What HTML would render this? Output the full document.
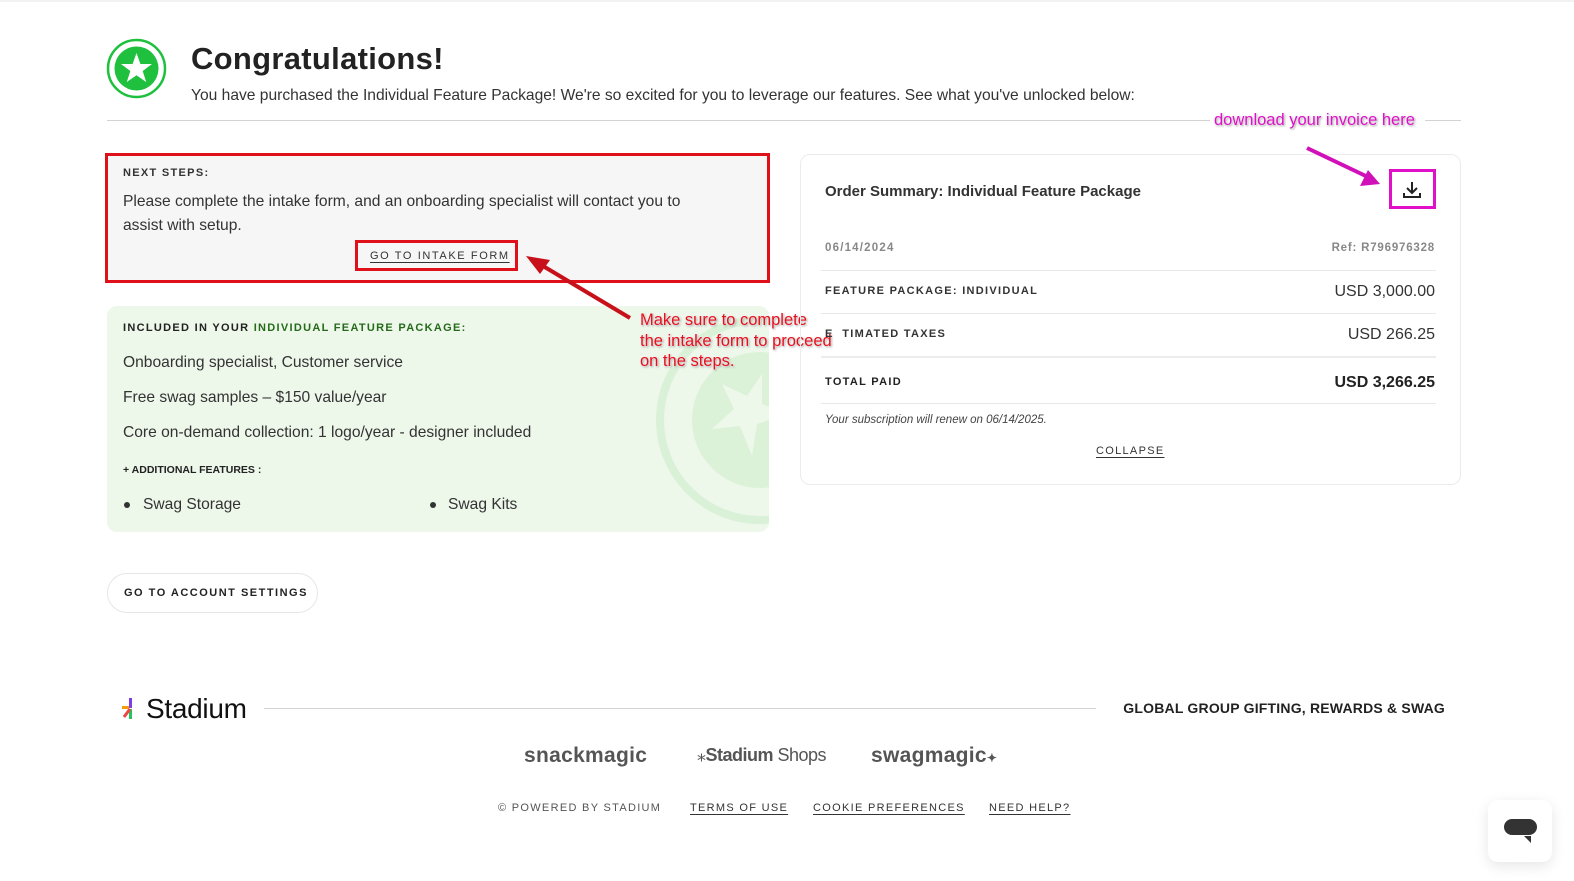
<!DOCTYPE html>
<html><head><meta charset="utf-8"><style>
*{margin:0;padding:0;box-sizing:border-box}
body{width:1574px;height:881px;background:#fff;font-family:"Liberation Sans",sans-serif;color:#222;position:relative;overflow:hidden}
.a{position:absolute;white-space:nowrap}
.cap{text-transform:uppercase;letter-spacing:1.3px;font-weight:bold}
.ann{font-family:"Liberation Sans",sans-serif;text-shadow:0 0 2px #fff,1px 1px 2px #888,0 0 3px #fff}
u{text-underline-offset:3px}
</style></head><body>
<div class="a" style="left:0;top:0;width:1574px;height:2px;background:#f2f2f2"></div>
<svg class="a" style="left:106px;top:38px" width="61" height="61" viewBox="0 0 61 61">
<circle cx="30.5" cy="30.5" r="28.5" fill="none" stroke="#1fc03e" stroke-width="2.5"/>
<circle cx="30.5" cy="30.5" r="22" fill="#1fc03e"/>
<polygon points="30.5,15 34.4,26 46,26 36.7,33 40.2,44 30.5,37.3 20.8,44 24.3,33 15,26 26.6,26" fill="#fff"/>
</svg>
<div class="a" style="left:191px;top:41px;font-size:31px;font-weight:bold;color:#222;letter-spacing:0.3px">Congratulations!</div>
<div class="a" style="left:191px;top:87px;font-size:15.6px;color:#333">You have purchased the Individual Feature Package! We're so excited for you to leverage our features. See what you've unlocked below:</div>
<div class="a" style="left:107px;top:120px;width:1354px;height:1px;background:#d3d3d3"></div>

<!-- next steps -->
<div class="a" style="left:107px;top:155px;width:661px;height:126px;background:#f6f6f6"></div>
<div class="a" style="left:105px;top:153px;width:665px;height:130px;border:3px solid #e0101a"></div>
<div class="a cap" style="left:123px;top:167px;font-size:11px;color:#333">Next steps:</div>
<div class="a" style="left:123px;top:190px;font-size:15.6px;line-height:24px;color:#333;white-space:normal;width:600px">Please complete the intake form, and an onboarding specialist will contact you to assist with setup.</div>
<div class="a" style="left:355px;top:240px;width:163px;height:31px;border:3px solid #e0101a"></div>
<div class="a cap" style="left:370px;top:250px;font-size:11px;color:#333;font-weight:normal;letter-spacing:1.6px"><u>Go to intake form</u></div>

<!-- green box -->
<div class="a" style="left:107px;top:306px;width:662px;height:226px;background:#edf7ea;border-radius:10px;overflow:hidden">
<svg style="position:absolute;left:540px;top:0px" width="130" height="226"><circle cx="113" cy="114" r="100" fill="none" stroke="#d9f1d6" stroke-width="8"/><circle cx="113" cy="114" r="68" fill="#dcf2d8"/><polygon points="75,78 100,90 115,68 115,98 140,108 110,118 105,150 93,120 65,123 87,103" fill="#edf7ea"/></svg>
</div>
<div class="a cap" style="left:123px;top:322px;font-size:11px;color:#222">Included in your <span style="color:#256b1a">Individual Feature Package:</span></div>
<div class="a" style="left:123px;top:354px;font-size:15.6px;color:#333">Onboarding specialist, Customer service</div>
<div class="a" style="left:123px;top:389px;font-size:15.6px;color:#333">Free swag samples – $150 value/year</div>
<div class="a" style="left:123px;top:424px;font-size:15.6px;color:#333">Core on-demand collection: 1 logo/year - designer included</div>
<div class="a" style="left:123px;top:464px;font-size:10.5px;font-weight:bold;color:#222">+ ADDITIONAL FEATURES :</div>
<div class="a" style="left:124px;top:502px;width:6px;height:6px;border-radius:3px;background:#333"></div>
<div class="a" style="left:143px;top:496px;font-size:15.6px;color:#333">Swag Storage</div>
<div class="a" style="left:430px;top:502px;width:6px;height:6px;border-radius:3px;background:#333"></div>
<div class="a" style="left:448px;top:496px;font-size:15.6px;color:#333">Swag Kits</div>

<!-- arrow red -->
<svg class="a" style="left:520px;top:250px" width="120" height="80"><line x1="110" y1="68" x2="18" y2="13" stroke="#c8101a" stroke-width="4"/><polygon points="6,6 30,10 20,24" fill="#c8101a"/></svg>
<div class="a ann" style="left:640px;top:310px;font-size:16.5px;line-height:20.5px;color:#e8101c">Make sure to complete<br>the intake form to proceed<br>on the steps.</div>

<!-- order summary -->
<div class="a" style="left:800px;top:154px;width:661px;height:331px;border:1px solid #ececec;border-radius:10px"></div>
<div class="a" style="left:825px;top:183px;font-size:15px;font-weight:bold;color:#333">Order Summary: Individual Feature Package</div>
<div class="a" style="left:1389px;top:169px;width:47px;height:40px;border:3px solid #e010c8"></div>
<svg class="a" style="left:1402px;top:181px" width="20" height="18" viewBox="0 0 20 18"><path d="M10 1v11M5 7l5 5 5-5M2 12v4h16v-4" fill="none" stroke="#222" stroke-width="2"/></svg>
<svg class="a" style="left:1300px;top:140px" width="90" height="50"><line x1="7" y1="8" x2="70" y2="38" stroke="#d010b8" stroke-width="4"/><polygon points="80,44 60,46 68,30" fill="#d010b8"/></svg>
<div class="a" style="left:1210px;top:120px;width:251px;height:1px;background:#fff"></div>
<div class="a" style="left:1425px;top:120px;width:36px;height:1px;background:#d3d3d3"></div>
<div class="a ann" style="left:1214px;top:111px;font-size:16.5px;color:#e010c8">download your invoice here</div>

<div class="a" style="left:825px;top:242px;font-size:11.5px;font-weight:bold;color:#888;letter-spacing:1.2px">06/14/2024</div>
<div class="a" style="right:139px;top:242px;font-size:11.5px;font-weight:bold;color:#888;letter-spacing:0.8px">Ref: R796976328</div>
<div class="a" style="left:821px;top:270px;width:615px;height:1px;background:#e8e8e8"></div>
<div class="a cap" style="left:825px;top:285px;font-size:11px;color:#333">Feature package: individual</div>
<div class="a" style="right:139px;top:283px;font-size:16px;color:#333">USD 3,000.00</div>
<div class="a" style="left:821px;top:313px;width:615px;height:1px;background:#e8e8e8"></div>
<div class="a cap" style="left:825px;top:328px;font-size:11px;color:#333">E<span style="visibility:hidden">S</span>TIMATED TAXES</div>
<div class="a" style="right:139px;top:326px;font-size:16px;color:#333">USD 266.25</div>
<div class="a" style="left:821px;top:356px;width:615px;height:2px;background:#ececec"></div>
<div class="a cap" style="left:825px;top:376px;font-size:11px;color:#222">Total paid</div>
<div class="a" style="right:139px;top:374px;font-size:16px;font-weight:bold;color:#222">USD 3,266.25</div>
<div class="a" style="left:821px;top:403px;width:615px;height:1px;background:#e8e8e8"></div>
<div class="a" style="left:825px;top:414px;font-size:11.5px;font-style:italic;color:#444">Your subscription will renew on 06/14/2025.</div>
<div class="a cap" style="left:1096px;top:445px;font-size:11px;color:#333;font-weight:normal"><u>Collapse</u></div>

<div class="a" style="left:107px;top:573px;width:211px;height:40px;border:1px solid #e6e6e6;border-radius:20px"></div>
<div class="a cap" style="left:124px;top:587px;font-size:11px;color:#222;letter-spacing:1.5px">Go to account settings</div>

<!-- footer -->
<svg class="a" style="left:122px;top:698px" width="16" height="22"><rect x="7" y="0" width="3" height="10" fill="#7b3fe4"/><rect x="7" y="11" width="3" height="10" fill="#22c55e"/><rect x="0" y="8" width="7" height="3" fill="#f59e0b"/><line x1="2" y1="19" x2="8" y2="11" stroke="#ef4444" stroke-width="3"/></svg>
<div class="a" style="left:146px;top:693px;font-size:28px;color:#111;letter-spacing:-0.3px">Stadium</div>
<div class="a" style="left:264px;top:708px;width:832px;height:1px;background:#d3d3d3"></div>
<div class="a" style="right:129px;top:700px;font-size:14px;font-weight:bold;color:#222;letter-spacing:0.2px">GLOBAL GROUP GIFTING, REWARDS &amp; SWAG</div>
<div class="a" style="left:524px;top:744px;font-size:21px;font-weight:bold;color:#555;letter-spacing:0.3px">snackmagic</div>
<div class="a" style="left:697px;top:745px;font-size:18px;color:#555;letter-spacing:-0.5px">⁎<b>Stadium</b> Shops</div>
<div class="a" style="left:871px;top:744px;font-size:21px;font-weight:bold;color:#555;letter-spacing:0.3px">swagmagic<span style="font-size:12px">✦</span></div>
<div class="a" style="left:498px;top:802px;font-size:11px;color:#555;letter-spacing:1.3px">© POWERED BY STADIUM</div>
<div class="a" style="left:690px;top:802px;font-size:11px;color:#333;letter-spacing:1.3px"><u>TERMS OF USE</u></div>
<div class="a" style="left:813px;top:802px;font-size:11px;color:#333;letter-spacing:1.3px"><u>COOKIE PREFERENCES</u></div>
<div class="a" style="left:989px;top:802px;font-size:11px;color:#333;letter-spacing:1.3px"><u>NEED HELP?</u></div>

<div class="a" style="left:1488px;top:800px;width:64px;height:62px;border-radius:10px;background:#fff;box-shadow:0 4px 14px rgba(0,0,0,0.1)"></div>
<svg class="a" style="left:1504px;top:819px" width="34" height="30"><rect x="0" y="0" width="33" height="16" rx="8" fill="#333"/><polygon points="20,17 27,17 27,24" fill="#333"/></svg>
</body></html>
